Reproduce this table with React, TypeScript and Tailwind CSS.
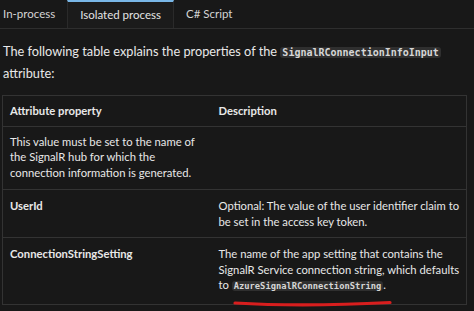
import React from "react";

const code =
  "whitespace-nowrap rounded-[3px] bg-[#2f2f2f] px-[2px] font-semibold text-[#d6d6d6] [font-family:'DejaVu_Sans_Mono',monospace]";

export default function App() {
  return (
    <div className="relative h-[311px] w-[474px] overflow-hidden bg-[#181818] text-[#e8e8e8] [font-family:Lato,sans-serif]">
      {/* Tabs */}
      <div className="flex h-[29px] items-stretch border-b border-[#2e2e2e] text-[11.5px]">
        <div className="flex items-center pl-[3px] pr-[12px] text-[#d4d4d4]">In-process</div>
        <div className="flex items-center border-x border-t-[2px] border-x-[#2a2a2a] border-t-[#78b6e6] bg-[#1b1b1b] px-[12px] text-[#e4e4e4]">
          Isolated process
        </div>
        <div className="flex items-center px-[12px] text-[#d4d4d4]">C# Script</div>
      </div>

      {/* Intro */}
      <p className="mt-[12px] px-[3px] text-[12.75px] leading-[21px]">
        The following table explains the properties of the{" "}
        <code className={`${code} text-[10px]`}>SignalRConnectionInfoInput</code>
        <br />
        attribute:
      </p>

      {/* Table */}
      <table className="ml-[2px] mt-[11px] w-[465px] border-collapse border border-[#333333] text-[11.25px] leading-[15.5px]">
        <thead>
          <tr className="border-b border-[#333333]">
            <th className="w-[209px] px-[7px] py-[7px] text-left font-bold">Attribute property</th>
            <th className="pl-[7px] pr-[2px] py-[7px] text-left font-bold">Description</th>
          </tr>
        </thead>
        <tbody>
          <tr className="border-b border-[#333333]">
            <td className="px-[7px] pt-[7px] pb-[9px] align-top">
              This value must be set to the name of the SignalR hub for which the connection
              information is generated.
            </td>
            <td className="pl-[7px] pr-[2px] pt-[7px] pb-[9px] align-top"></td>
          </tr>
          <tr className="border-b border-[#333333]">
            <td className="px-[7px] py-[8px] align-top font-bold">UserId</td>
            <td className="pl-[7px] pr-[2px] py-[8px] align-top">
              Optional: The value of the user identifier claim to be set in the access key token.
            </td>
          </tr>
          <tr>
            <td className="px-[7px] pt-[8px] pb-[9px] align-top font-bold">ConnectionStringSetting</td>
            <td className="pl-[7px] pr-[2px] pt-[8px] pb-[9px] align-top">
              The name of the app setting that contains the SignalR Service connection string,
              which defaults to{" "}
              <code className={`${code} text-[8.75px]`}>AzureSignalRConnectionString</code>.
            </td>
          </tr>
        </tbody>
      </table>

      {/* Red underline annotation */}
      <svg
        className="absolute left-[232px] top-[299px]"
        width="162"
        height="10"
        viewBox="0 0 162 10"
      >
        <path
          d="M3 4 Q 70 8 158 3.5"
          stroke="#d81e1e"
          strokeWidth="3.2"
          strokeLinecap="round"
          fill="none"
        />
      </svg>
    </div>
  );
}
